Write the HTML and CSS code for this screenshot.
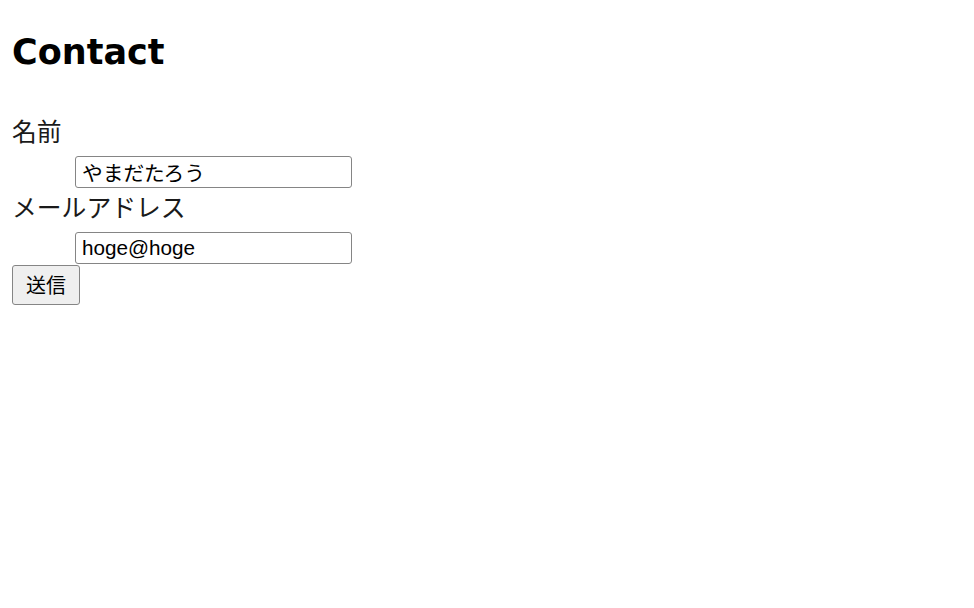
FILE: index.html
```html
<!DOCTYPE html>
<html lang="ja">
<head>
<meta charset="utf-8">
<title>Contact</title>
<link rel="stylesheet" href="styles.css">
</head>
<body>
<section class="contact">
  <h1 class="title">Contact</h1>
  <form class="form">
    <dl class="fields">
      <dt class="label">名前</dt>
      <dd class="field"><input class="input" type="text" value="やまだたろう"></dd>
      <dt class="label">メールアドレス</dt>
      <dd class="field"><input class="input" type="email" value="hoge@hoge"></dd>
    </dl>
    <button class="submit" type="button">送信</button>
  </form>
</section>
</body>
</html>
```
FILE: styles.css
```css
html, body {
  margin: 0;
  padding: 0;
  background: #fff;
}
body {
  padding: 0 12px;
  color: #000;
  font-family: "Noto Sans CJK JP", sans-serif;
}
.contact {
  padding-top: 32px;
}
.title {
  margin: 0;
  font-family: "DejaVu Sans", "Noto Sans CJK JP", sans-serif;
  font-weight: bold;
  font-size: 35px;
  line-height: 40px;
  height: 40px;
}
.form {
  margin: 0;
}
.fields {
  margin: 40px 0 0;
  padding: 0;
}
.label {
  margin: 0;
  font-size: 24.8px;
  line-height: 36px;
  height: 36px;
  color: #1a1a1a;
  font-family: "Noto Sans CJK JP", sans-serif;
}
.field {
  margin: 0 0 0 63px;
  padding-top: 8px;
}
.input {
  display: block;
  box-sizing: border-box;
  width: 277px;
  height: 32px;
  margin: 0;
  padding: 0 6px;
  border: 1.5px solid #858585;
  border-radius: 3px;
  background: #fff;
  color: #000;
  font-family: "Liberation Sans", "Noto Sans CJK JP", sans-serif;
  font-size: 20.7px;
}
.submit {
  display: block;
  box-sizing: border-box;
  margin: 1px 0 0;
  width: 68px;
  height: 40px;
  padding: 0;
  border: 1.5px solid #858585;
  border-radius: 3px;
  background: #efefef;
  color: #000;
  font-family: "Noto Sans CJK JP", sans-serif;
  font-size: 20px;
  line-height: 1;
}
```
